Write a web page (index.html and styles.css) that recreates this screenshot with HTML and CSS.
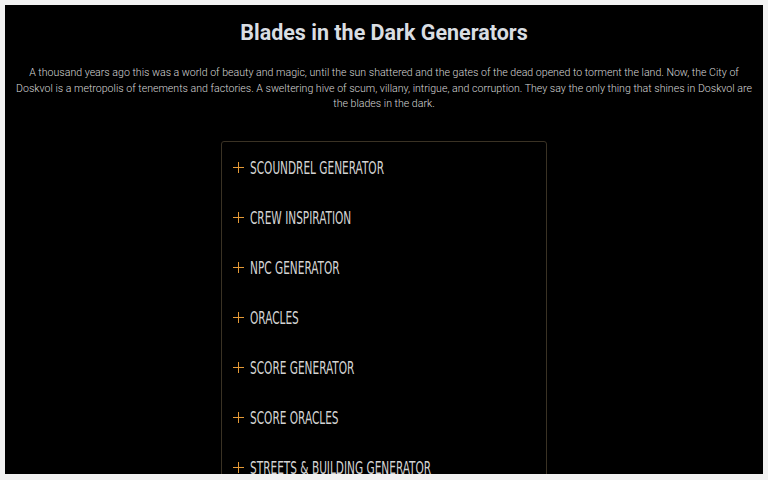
FILE: index.html
```html
<!DOCTYPE html>
<html lang="en">
<head>
  <meta charset="UTF-8" />
  <meta name="viewport" content="width=device-width, initial-scale=1.0"/>
  <title>Blades in the Dark Generators</title>
  <link rel="stylesheet" href="styles.css">
</head>
<body>

  <div class="page">
    <h1>Blades in the Dark Generators</h1>

    <p class="intro">A thousand years ago this was a world of beauty and magic, until the sun shattered and the gates of the dead opened to torment the land. Now, the City of<br>Doskvol is a metropolis of tenements and factories. A sweltering hive of scum, villany, intrigue, and corruption. They say the only thing that shines in Doskvol are the blades in the dark.</p>

    <div class="generator-list">
      <div class="generator"><span class="plus"></span><span class="generator-name">SCOUNDREL GENERATOR</span></div>
      <div class="generator"><span class="plus"></span><span class="generator-name">CREW INSPIRATION</span></div>
      <div class="generator"><span class="plus"></span><span class="generator-name">NPC GENERATOR</span></div>
      <div class="generator"><span class="plus"></span><span class="generator-name">ORACLES</span></div>
      <div class="generator"><span class="plus"></span><span class="generator-name">SCORE GENERATOR</span></div>
      <div class="generator"><span class="plus"></span><span class="generator-name">SCORE ORACLES</span></div>
      <div class="generator"><span class="plus"></span><span class="generator-name">STREETS &amp; BUILDING GENERATOR</span></div>
      <div class="generator"><span class="plus"></span><span class="generator-name">FACTIONS</span></div>
    </div>
  </div>

</body>
</html>
```

FILE: styles.css
```css
body {
  margin: 0;
  padding: 5px 5px 6px 5px;
  background: #f2f2f2;
  font-family: Roboto, "Liberation Sans", sans-serif;
}

.page {
  background: #000;
  height: 469px;
  overflow: hidden;
  padding: 0 9px;
  box-sizing: border-box;
  text-align: center;
}

h1 {
  margin: 0;
  padding-top: 14px;
  font-size: 21.5px;
  font-weight: bold;
  line-height: 28px;
  color: #d9dde2;
}

.intro {
  margin: 18px 0 0;
  font-size: 10.6px;
  font-weight: 300;
  line-height: 15.5px;
  color: #d6d6d6;
}

.generator-list {
  width: 326px;
  margin: 29px auto 0;
  border: 1px solid #3a3224;
  border-radius: 3px;
  box-sizing: border-box;
  padding: 1px 0 0 11px;
  text-align: left;
}

.generator {
  display: flex;
  align-items: center;
  height: 50px;
  cursor: pointer;
}

.plus {
  position: relative;
  width: 11px;
  height: 11px;
  margin-right: 6px;
  flex-shrink: 0;
}

.plus::before,
.plus::after {
  content: "";
  position: absolute;
  background: #e69a36;
}

.plus::before {
  left: 0;
  top: 5px;
  width: 11px;
  height: 1px;
}

.plus::after {
  left: 5px;
  top: 0;
  width: 1px;
  height: 11px;
}

.generator-name {
  display: inline-block;
  font-family: "Liberation Sans Narrow", "DejaVu Sans Condensed", sans-serif;
  font-size: 17px;
  color: #d4d4d4;
  white-space: nowrap;
  transform: scaleX(0.69);
  transform-origin: left center;
}
```
